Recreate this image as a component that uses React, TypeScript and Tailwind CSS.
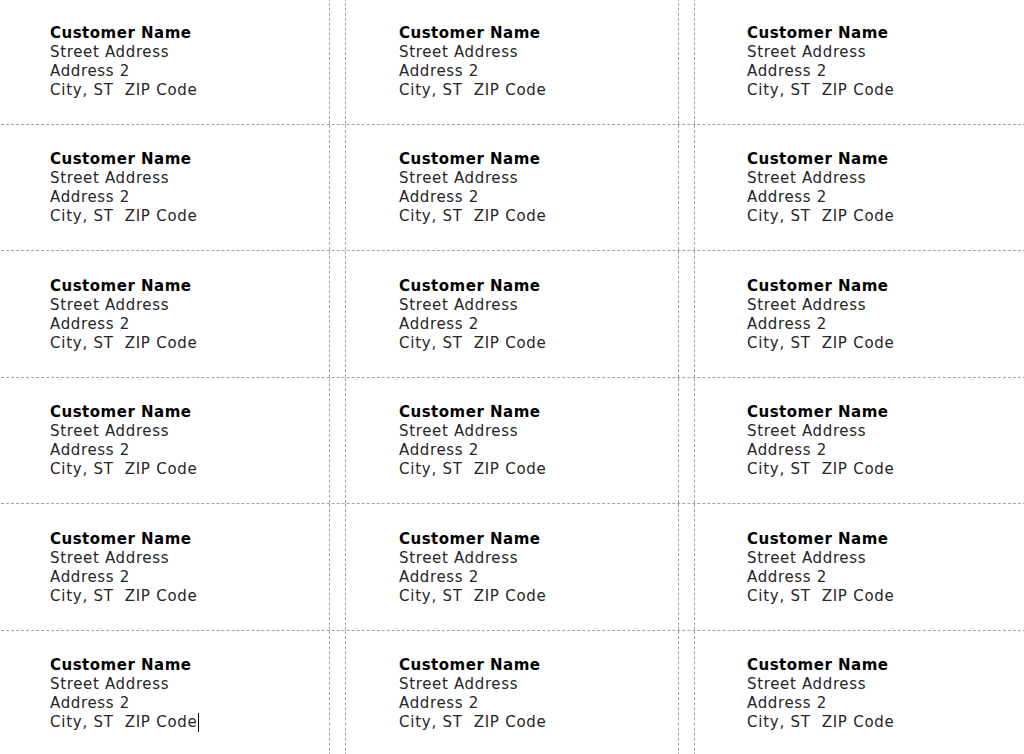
const rows = [0, 1, 2, 3, 4, 5];
const cols = [0, 1, 2];

function Label({ caret, pad }: { caret?: boolean; pad: string }) {
  return (
    <div className={`pt-[25.5px] ${pad} text-[15px] leading-[19px] tracking-[0.65px] text-[#262626]`}>
      <div className="font-bold tracking-[0.5px] text-black">Customer Name</div>
      <div>Street Address</div>
      <div>Address 2</div>
      <div className="flex items-center">
        <span className="whitespace-pre tracking-[0.75px]">City, ST  ZIP Code</span>
        {caret && <span className="inline-block h-[19px] w-0 border-l border-black" />}
      </div>
    </div>
  );
}

export default function App() {
  return (
    <div
      className="h-[754px] w-[1024px] overflow-hidden bg-white"
      style={{ fontFamily: '"DejaVu Sans", Verdana, sans-serif' }}
    >
      <div className="-mt-[2px] -ml-[4px] flex w-[1040px] flex-col">
        {rows.map((r) => (
          <div key={r} className="flex h-[126.5px] shrink-0 gap-[15px] border-b border-dashed border-[#9aa7b0]">
            {cols.map((c) => (
              <div
                key={c}
                className={`h-full w-[334px] shrink-0 border-dashed border-[#9aa7b0] ${
                  c === 0 ? "border-r" : c === 1 ? "border-x" : "border-l"
                }`}
              >
                <Label
                  caret={r === 5 && c === 0}
                  pad={c === 0 ? "pl-[54px]" : c === 1 ? "pl-[53px]" : "pl-[52px]"}
                />
              </div>
            ))}
          </div>
        ))}
      </div>
    </div>
  );
}
